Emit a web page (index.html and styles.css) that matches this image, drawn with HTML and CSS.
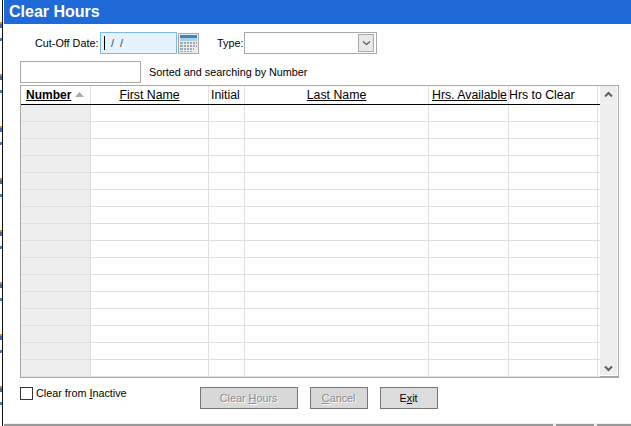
FILE: index.html
```html
<!DOCTYPE html>
<html lang="en">
<head>
<meta charset="utf-8">
<title>Clear Hours</title>
<link rel="stylesheet" href="styles.css">
</head>
<body>
<div class="desk-edge"><span class="desk-pattern"></span><span class="desk-line"></span></div>
<main class="window">
  <header class="titlebar">Clear Hours</header>
  <div class="content">
    <div class="filter-row">
      <label class="lbl lbl-date">Cut-Off Date:</label>
      <div class="date-input"><span class="caret"></span><span class="date-mask">/ /</span></div>
      <svg class="cal" width="21" height="21" viewBox="0 0 21 21">
        <rect x="0" y="0" width="21" height="21" fill="#a9a9a9"/>
        <rect x="1" y="1" width="19" height="19" fill="#e8eeee"/>
        <rect x="2" y="2" width="17" height="3" fill="#3f86c0"/>
        <rect x="2" y="5" width="17" height="3" fill="#a9cfe2"/>
        <g fill="#a0a7ad">
          <rect x="2" y="9" width="17" height="2"/>
          <rect x="2" y="12" width="17" height="2"/>
          <rect x="2" y="15" width="14" height="2"/>
          <rect x="2" y="18" width="12" height="1"/>
        </g>
        <g fill="#e8eeee">
          <rect x="5" y="8" width="1" height="11"/>
          <rect x="8" y="8" width="1" height="11"/>
          <rect x="11" y="8" width="1" height="11"/>
          <rect x="14" y="8" width="1" height="11"/>
          <rect x="17" y="8" width="1" height="11"/>
        </g>
      </svg>
      <label class="lbl lbl-type">Type:</label>
      <div class="select">
        <span class="select-btn">
          <svg width="9" height="6" viewBox="0 0 9 6"><path d="M1 1.500 4.500 4.500 8 1.500" fill="none" stroke="#555" stroke-width="1.100"/></svg>
        </span>
      </div>
    </div>
    <div class="search-row">
      <div class="search-box"></div>
      <span class="search-note">Sorted and searching by Number</span>
    </div>
    <div class="grid">
      <div class="grid-main">
        <div class="grid-row grid-head">
          <div class="cell c1 sorted"><u>Number</u><svg class="sort" width="9" height="5" viewBox="0 0 9 5"><path d="M4.500 0 9 5H0z" fill="#aaa"/></svg></div>
          <div class="cell c2"><u>First Name</u></div>
          <div class="cell c3 plain">Initial</div>
          <div class="cell c4"><u>Last Name</u></div>
          <div class="cell c5"><u>Hrs. Available</u></div>
          <div class="cell c6 plain">Hrs to Clear</div>
          <div class="cell c7"></div>
        </div>
        <div class="grid-body" id="grid-body"></div>
      </div>
      <div class="scrollbar">
        <svg width="9" height="7" viewBox="0 0 9 7"><path d="M1 5.500 4.500 2 8 5.500" fill="none" stroke="#606060" stroke-width="2"/></svg>
        <svg width="9" height="7" viewBox="0 0 9 7"><path d="M1 1.500 4.500 5 8 1.500" fill="none" stroke="#606060" stroke-width="2"/></svg>
      </div>
    </div>
    <div class="footer-row">
      <div class="check-wrap"><span class="check"></span><span class="check-label">Clear from <u>I</u>nactive</span></div>
      <div class="buttons">
        <button class="btn btn-clear" disabled>Clear <u>H</u>ours</button>
        <button class="btn btn-cancel" disabled><u>C</u>ancel</button>
        <button class="btn btn-exit">E<u>x</u>it</button>
      </div>
    </div>
    <div class="taskbar">
      <span class="tb tb1"></span>
      <span class="tb tb2"></span>
      <span class="tb tb3"></span>
    </div>
  </div>
</main>
<script src="grid.js"></script>
</body>
</html>
```
FILE: grid.js
```js
var body = document.getElementById('grid-body');
var html = '';
for (var i = 0; i < 16; i++) {
  html += '<div class="grid-row">' +
    ['c1 key', 'c2', 'c3', 'c4', 'c5', 'c6', 'c7'].map(function (c) {
      return '<div class="cell ' + c + '"></div>';
    }).join('') + '</div>';
}
body.innerHTML = html;
```
FILE: styles.css
```css
* { box-sizing: border-box; }
html, body { margin: 0; height: 100%; }
body {
  width: 631px;
  height: 426px;
  overflow: hidden;
  display: flex;
  background: #fff;
  font-family: "Liberation Sans", Arial, sans-serif;
  color: #000;
}
.desk-edge { width: 4px; flex: none; display: flex; background: #fff; }
.desk-pattern {
  width: 2px;
  background: repeating-linear-gradient(180deg, #fff 0 22px, #d98a2b 22px 24px, #3b6fb5 24px 28px, #fff 28px 38px, #4a78b8 38px 41px, #fff 41px 52px);
}
.desk-line { width: 1px; background: #111; }
.window { flex: 1; display: flex; flex-direction: column; min-width: 0; }
.titlebar {
  height: 24px;
  flex: none;
  background: #1f6ad9;
  color: #fff;
  font-size: 16px;
  font-weight: 700;
  line-height: 24px;
  padding-left: 5px;
}
.content { flex: 1; padding-left: 16px; position: relative; }
.filter-row { display: flex; align-items: center; height: 22px; margin-top: 8px; font-size: 10.800px; }
.lbl { white-space: nowrap; }
.lbl-date { margin-left: 15px; width: 65px; }
.date-input {
  width: 77px; height: 22px;
  background: #e6f2fc;
  border: 1px solid #7cb8ea;
  display: flex; align-items: center;
  padding-left: 3px;
}
.caret { width: 1px; height: 14px; background: #000; }
.date-mask { margin-left: 6px; font-size: 11px; word-spacing: 3px; color: #4a3a3a; }
.cal { margin-left: 1px; }
.lbl-type { margin-left: 18px; width: 27px; }
.select {
  width: 133px; height: 22px;
  border: 1px solid #a9a9a9;
  display: flex; justify-content: flex-end; align-items: center;
  padding-right: 2px;
}
.select-btn {
  width: 16px; height: 18px;
  background: #e8e8e8;
  border: 1px solid #a9a9a9;
  display: flex; align-items: center; justify-content: center;
}
.search-row { display: flex; align-items: center; height: 22px; margin-top: 7px; }
.search-box { width: 121px; height: 22px; border: 1px solid #a9a9a9; }
.search-note { margin-left: 8px; font-size: 10.800px; }
.grid {
  width: 599px; height: 293px;
  margin-top: 2px;
  border: 1px solid #a9a9a9;
  border-bottom-width: 2px;
  display: flex;
}
.grid-main { width: 579px; flex: none; }
.grid-row { display: flex; height: 17px; }
.grid-head { height: 19px; border-bottom: 1px solid #000; }
.cell { border-right: 1px solid #e0e0e0; border-bottom: 1px solid #e0e0e0; flex: none; }
.grid-head .cell {
  border-bottom: 0;
  font-size: 12.300px;
  line-height: 18px;
  text-align: center;
  white-space: nowrap;
}
.c1 { width: 70px; }
.c2 { width: 118px; }
.c3 { width: 36px; }
.c4 { width: 184px; }
.c5 { width: 80px; }
.c6 { width: 89px; }
.c7 { width: 2px; border-right: 0; }
.key { background: #eee; }
.grid-head .sorted { font-weight: 700; font-size: 12px; text-align: left; padding-left: 5px; }
.sort { margin-left: 4px; vertical-align: 2px; }
.grid-head .plain { text-align: left; padding-left: 2px; }
.grid-head .c5 { text-align: left; padding-left: 3px; }
.grid-head .c6 { padding-left: 0; }
.scrollbar {
  width: 17px;
  margin-bottom: 1px;
  background: #eee;
  display: flex; flex-direction: column; justify-content: space-between; align-items: center;
  padding: 5px 0 3px;
}
.footer-row { display: flex; height: 30px; margin-top: 8px; font-size: 10.800px; }
.check-wrap { display: flex; align-items: center; height: 14px; }
.check { width: 13px; height: 13px; border: 1px solid #333; background: #fff; }
.check-label { margin-left: 3px; }
.buttons { display: flex; margin-left: 73px; margin-top: 1px; }
.btn {
  height: 22px;
  padding: 0;
  border: 1px solid #777;
  background: #dcdcdc;
  font: 10.800px "Liberation Sans", Arial, sans-serif;
  color: #000;
}
.btn:disabled { color: #8a8a8a; text-shadow: 1px 1px 0 #fff; background: #d8d8d8; }
.btn-clear { width: 98px; }
.btn-cancel { width: 58px; margin-left: 12px; }
.btn-exit { width: 58px; margin-left: 12px; }
.taskbar {
  position: absolute;
  left: 0; right: 0; bottom: 0;
  height: 3px;
  background: #eee;
  display: flex;
  align-items: flex-end;
  gap: 3px;
}
.tb { height: 2px; background: #999; }
.tb1 { flex: 1; }
.tb2 { width: 38px; }
.tb3 { width: 34px; }
```
